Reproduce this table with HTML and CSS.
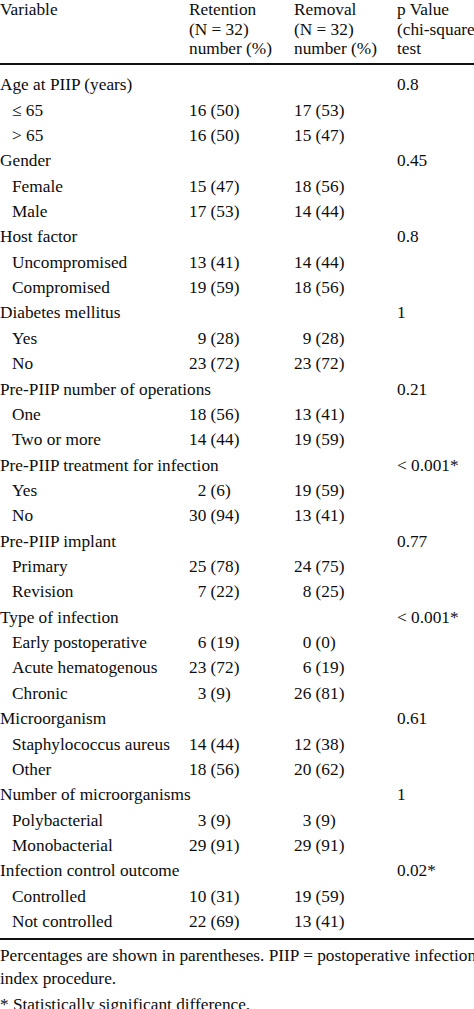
FILE: index.html
```html
<!DOCTYPE html>
<html>
<head>
<meta charset="utf-8">
<link rel="stylesheet" href="styles.css">
</head>
<body>
<div class="page">
<table class="tbl">
<colgroup><col class="c1"><col class="c2"><col class="c3"><col class="c4"></colgroup>
<thead>
<tr><th>Variable</th><th>Retention<br>(N = 32)<br>number (%)</th><th>Removal<br>(N = 32)<br>number (%)</th><th>p Value<br>(chi-square<br>test</th></tr>
</thead>
<tbody>
<tr><td>Age at PIIP (years)</td><td></td><td></td><td>0.8</td></tr>
<tr><td class="sub">≤ 65</td><td>16 (50)</td><td>17 (53)</td><td></td></tr>
<tr><td class="sub">&gt; 65</td><td>16 (50)</td><td>15 (47)</td><td></td></tr>
<tr><td>Gender</td><td></td><td></td><td>0.45</td></tr>
<tr><td class="sub">Female</td><td>15 (47)</td><td>18 (56)</td><td></td></tr>
<tr><td class="sub">Male</td><td>17 (53)</td><td>14 (44)</td><td></td></tr>
<tr><td>Host factor</td><td></td><td></td><td>0.8</td></tr>
<tr><td class="sub">Uncompromised</td><td>13 (41)</td><td>14 (44)</td><td></td></tr>
<tr><td class="sub">Compromised</td><td>19 (59)</td><td>18 (56)</td><td></td></tr>
<tr><td>Diabetes mellitus</td><td></td><td></td><td>1</td></tr>
<tr><td class="sub">Yes</td><td>&#8199;9 (28)</td><td>&#8199;9 (28)</td><td></td></tr>
<tr><td class="sub">No</td><td>23 (72)</td><td>23 (72)</td><td></td></tr>
<tr><td>Pre-PIIP number of operations</td><td></td><td></td><td>0.21</td></tr>
<tr><td class="sub">One</td><td>18 (56)</td><td>13 (41)</td><td></td></tr>
<tr><td class="sub">Two or more</td><td>14 (44)</td><td>19 (59)</td><td></td></tr>
<tr><td>Pre-PIIP treatment for infection</td><td></td><td></td><td>&lt; 0.001*</td></tr>
<tr><td class="sub">Yes</td><td>&#8199;2 (6)</td><td>19 (59)</td><td></td></tr>
<tr><td class="sub">No</td><td>30 (94)</td><td>13 (41)</td><td></td></tr>
<tr><td>Pre-PIIP implant</td><td></td><td></td><td>0.77</td></tr>
<tr><td class="sub">Primary</td><td>25 (78)</td><td>24 (75)</td><td></td></tr>
<tr><td class="sub">Revision</td><td>&#8199;7 (22)</td><td>&#8199;8 (25)</td><td></td></tr>
<tr><td>Type of infection</td><td></td><td></td><td>&lt; 0.001*</td></tr>
<tr><td class="sub">Early postoperative</td><td>&#8199;6 (19)</td><td>&#8199;0 (0)</td><td></td></tr>
<tr><td class="sub">Acute hematogenous</td><td>23 (72)</td><td>&#8199;6 (19)</td><td></td></tr>
<tr><td class="sub">Chronic</td><td>&#8199;3 (9)</td><td>26 (81)</td><td></td></tr>
<tr><td>Microorganism</td><td></td><td></td><td>0.61</td></tr>
<tr><td class="sub">Staphylococcus aureus</td><td>14 (44)</td><td>12 (38)</td><td></td></tr>
<tr><td class="sub">Other</td><td>18 (56)</td><td>20 (62)</td><td></td></tr>
<tr><td>Number of microorganisms</td><td></td><td></td><td>1</td></tr>
<tr><td class="sub">Polybacterial</td><td>&#8199;3 (9)</td><td>&#8199;3 (9)</td><td></td></tr>
<tr><td class="sub">Monobacterial</td><td>29 (91)</td><td>29 (91)</td><td></td></tr>
<tr><td>Infection control outcome</td><td></td><td></td><td>0.02*</td></tr>
<tr><td class="sub">Controlled</td><td>10 (31)</td><td>19 (59)</td><td></td></tr>
<tr><td class="sub">Not controlled</td><td>22 (69)</td><td>13 (41)</td><td></td></tr>
</tbody>
</table>
<div class="notes">
<p class="note">Percentages are shown in parentheses. PIIP = postoperative infection index procedure.</p>
<p class="note note-gap">* Statistically significant difference.</p>
</div>
</div>
</body>
</html>
```
FILE: styles.css
```css
html, body {
  margin: 0;
  padding: 0;
  background: #ffffff;
  overflow: hidden;
}
.page {
  width: 490px;
  font-family: "Liberation Serif", "Times New Roman", serif;
  font-size: 17.3px;
  color: #0d0d0d;
}
.tbl {
  border-collapse: collapse;
  table-layout: fixed;
  width: 490px;
}
.c1 { width: 189px; }
.c2 { width: 105px; }
.c3 { width: 103px; }
.c4 { width: 93px; }
.tbl th {
  font-weight: normal;
  text-align: left;
  vertical-align: top;
  padding: 0 0 4px 0;
  line-height: 19.5px;
  white-space: nowrap;
  border-bottom: 2px solid #111111;
}
.tbl tbody tr:first-child td {
  padding-top: 7.7px;
}
.tbl td {
  padding: 0;
  line-height: 25.36px;
  white-space: nowrap;
  vertical-align: top;
}
.tbl tbody tr:last-child td {
  padding-bottom: 3.6px;
  border-bottom: 2px solid #111111;
}
.tbl td.sub {
  padding-left: 12px;
}
.notes {
  padding-top: 3.7px;
}
.note {
  margin: 0;
  line-height: 23px;
  width: 480px;
}
.note-gap {
  margin-top: 3px;
}
```
